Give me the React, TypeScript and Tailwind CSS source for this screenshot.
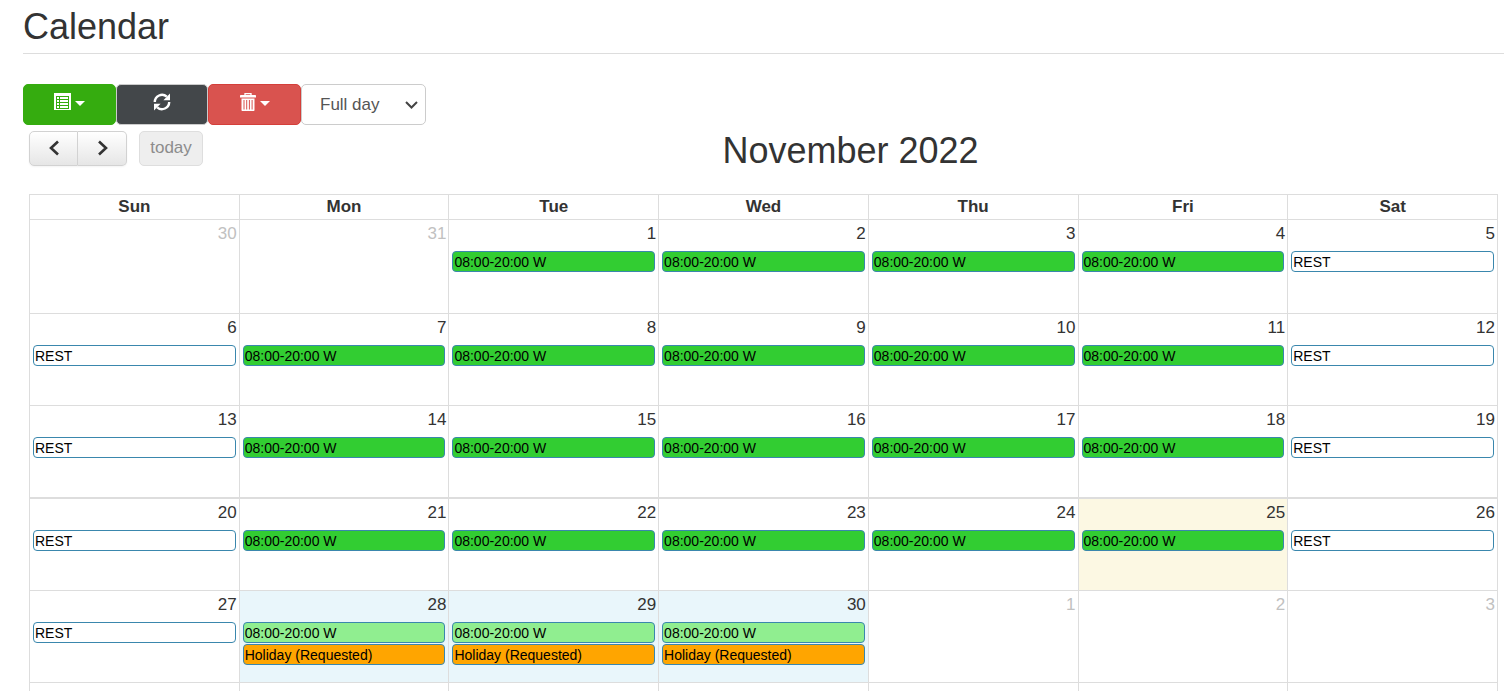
import { ReactNode } from 'react';

// ─── Data ─────────────────────────────────────────────────────────────────────
type EventKind = 'work' | 'rest' | 'pending' | 'holiday';
interface Day { key: string; label: number; other: boolean; events: EventKind[]; tint: string }

const WEEKDAYS = ['Sun', 'Mon', 'Tue', 'Wed', 'Thu', 'Fri', 'Sat'];

const EVENTS: Record<EventKind, { text: string; style: string }> = {
  work:    { text: '08:00-20:00 W',       style: 'bg-[#32cd32]' },
  rest:    { text: 'REST',                style: 'bg-white' },
  pending: { text: '08:00-20:00 W',       style: 'bg-[#90ee90]' },
  holiday: { text: 'Holiday (Requested)', style: 'bg-[#ffa500]' },
};

const TODAY = 25;
const SELECTED = [28, 29, 30];

// One entry per week row
const ROW_STYLES = ['h-[94px]', 'h-[92px]', 'h-[92px] border-b-2 border-[#dddddd]', 'h-[93px]', 'h-[92px]'];

function eventsFor(date: number, weekday: number): EventKind[] {
  if (SELECTED.includes(date)) return ['pending', 'holiday'];
  return weekday === 0 || weekday === 6 ? ['rest'] : ['work'];
}

function buildWeeks(): Day[][] {
  const first = new Date(2022, 9, 30);
  return Array.from({ length: 5 }, (_, week) =>
    Array.from({ length: 7 }, (_, weekday) => {
      const d = new Date(first.getFullYear(), first.getMonth(), first.getDate() + week * 7 + weekday);
      const date = d.getDate();
      const other = d.getMonth() !== 10;
      let tint = '';
      if (!other && date === TODAY) tint = 'bg-[#fcf8e3]';
      if (!other && SELECTED.includes(date)) tint = 'bg-[#e9f6fb]';
      return { key: d.toDateString(), label: date, other, tint, events: other ? [] : eventsFor(date, weekday) };
    })
  );
}

// ─── Icons ────────────────────────────────────────────────────────────────────
function ListIcon() {
  return (
    <svg width="17" height="17" viewBox="0 0 17 17" fill="currentColor" shapeRendering="crispEdges" aria-hidden="true">
      <path fillRule="evenodd" d="M0 0h17v17H0zM2 3v13h13V3z" />
      <path d="M3 4h2v2H3zM6 4h8v2H6zM3 7h2v2H3zM6 7h8v2H6zM3 10h2v2H3zM6 10h8v2H6zM3 13h2v2H3zM6 13h8v2H6z" />
    </svg>
  );
}

function RefreshIcon() {
  return (
    <svg width="18" height="18" viewBox="0 0 18 18" aria-hidden="true">
      <path d="M1.800 9a7.200 7.200 0 0 1 12-5.300M16.200 9a7.200 7.200 0 0 1-12 5.300" fill="none" stroke="currentColor" strokeWidth="2.400" />
      <path d="M17 .6v6.600h-6.600zM1 17.400v-6.600h6.600z" fill="currentColor" />
    </svg>
  );
}

function TrashIcon() {
  return (
    <svg width="16" height="18" viewBox="0 0 16 18" aria-hidden="true">
      <path d="M5 2.500V.7h6v1.800" fill="none" stroke="currentColor" strokeWidth="1.300" />
      <path fillRule="evenodd" fill="currentColor" d="M1 2h14c.6 0 1 .4 1 1v1.500H0V3c0-.6.4-1 1-1zM1.500 5.500h13V17c0 .6-.4 1-1 1h-11c-.6 0-1-.4-1-1zM3.500 7v9.500h1V7zM6.200 7v9.500h1V7zM8.900 7v9.500h1V7zM11.600 7v9.500h1V7z" />
    </svg>
  );
}

function Caret() {
  return (
    <svg className="mt-1" width="10" height="5" viewBox="0 0 10 5" fill="currentColor" aria-hidden="true">
      <path d="M0 0h10L5 5z" />
    </svg>
  );
}

function Chevron({ d }: { d: string }) {
  return (
    <svg width="12" height="16" viewBox="0 0 12 16" fill="none" stroke="currentColor" strokeWidth="2.600" aria-hidden="true">
      <path d={d} />
    </svg>
  );
}

// ─── Toolbar ──────────────────────────────────────────────────────────────────
function ActionButton({ label, style, children }: { label: string; style: string; children: ReactNode }) {
  return (
    <button type="button" aria-label={label} className={`flex h-[41px] items-center justify-center gap-1 rounded-[5px] border pb-[6px] text-white ${style}`}>
      {children}
    </button>
  );
}

function ActionBar() {
  return (
    <div className="flex">
      <ActionButton label="Templates" style="w-[93px] border-[#35ac0f] bg-[#35ac0f]">
        <ListIcon />
        <Caret />
      </ActionButton>
      <ActionButton label="Refresh" style="w-[92px] border-[#cccccc] bg-[#43474a]">
        <RefreshIcon />
      </ActionButton>
      <ActionButton label="Delete" style="w-[93px] border-[#d43f3a] bg-[#d9534f]">
        <TrashIcon />
        <Caret />
      </ActionButton>
      <div className="relative">
        <select aria-label="Day part" className="h-[41px] w-[125px] appearance-none rounded-[5px] border border-[#cccccc] bg-white px-[18px] text-[17px] text-[#555555]">
          <option>Full day</option>
        </select>
        <svg className="pointer-events-none absolute top-[17px] right-2" width="13" height="8" viewBox="0 0 13 8" fill="none" stroke="#444444" strokeWidth="2" aria-hidden="true">
          <path d="M1 1l5.500 5.500L12 1" />
        </svg>
      </div>
    </div>
  );
}

function CalendarHeader() {
  const nav = 'flex h-[35px] items-center justify-center border-[#d2d2d2] bg-linear-to-b from-white to-[#e6e6e6] pb-[2px]';
  return (
    <div className="flex items-start pt-[6px]">
      <div className="flex rounded-[5px] shadow-xs">
        <button type="button" aria-label="Previous month" className={`${nav} w-[49px] rounded-l-[5px] border`}>
          <Chevron d="M10 1.500L3 8l7 6.500" />
        </button>
        <button type="button" aria-label="Next month" className={`${nav} w-[49px] rounded-r-[5px] border-y border-r`}>
          <Chevron d="M3 1.500L10 8l-7 6.500" />
        </button>
      </div>
      <button type="button" disabled className="ml-3 h-[35px] w-16 rounded-[5px] border border-[#dedede] bg-[#eeeeee] pb-[2px] text-[17px] text-[#8c8c8c]">
        today
      </button>
      <h2 className="flex-1 text-center text-4xl leading-10">November 2022</h2>
    </div>
  );
}

// ─── Month grid ───────────────────────────────────────────────────────────────
function DayCell({ day }: { day: Day }) {
  return (
    <td className={`border-x border-t border-[#dddddd] p-0 align-top ${day.tint}`}>
      <div className={`px-[2px] pt-[2px] text-right leading-6 ${day.other ? 'text-[#c1c1c1]' : ''}`}>{day.label}</div>
      <div className="flex flex-col gap-px pt-[5px] pr-[3px] pl-[3px]">
        {day.events.map((kind) => (
          <a key={kind} href="#event" className={`block h-[21px] rounded-[4px] border border-[#3a87ad] px-px text-sm leading-5 text-black ${EVENTS[kind].style}`}>
            {EVENTS[kind].text}
          </a>
        ))}
      </div>
    </td>
  );
}

function MonthGrid() {
  return (
    <table className="mt-[23px] w-full table-fixed border-collapse text-[17px]">
      <thead>
        <tr>
          {WEEKDAYS.map((name) => (
            <th key={name} scope="col" className="h-[25px] border border-[#dddddd] p-0 leading-6 font-bold">{name}</th>
          ))}
        </tr>
      </thead>
      <tbody>
        {buildWeeks().map((week, i) => (
          <tr key={week[0].key} className={ROW_STYLES[i]}>
            {week.map((day) => <DayCell key={day.key} day={day} />)}
          </tr>
        ))}
        {/* trailing row, runs off the bottom of the view */}
        <tr className="h-[92px]">
          {WEEKDAYS.map((name) => <td key={name} className="border border-[#dddddd]" />)}
        </tr>
      </tbody>
    </table>
  );
}

// ─── App ──────────────────────────────────────────────────────────────────────
export default function App() {
  return (
    <div className="h-screen overflow-hidden bg-white pr-[7px] pl-[23px] font-['Liberation_Sans',Arial,sans-serif] text-[#333333]">
      <h1 className="mb-[30px] border-b border-[#dddddd] pt-[7px] pb-[6px] text-4xl leading-10">Calendar</h1>
      <ActionBar />
      <main className="px-[6px]">
        <CalendarHeader />
        <MonthGrid />
      </main>
    </div>
  );
}
